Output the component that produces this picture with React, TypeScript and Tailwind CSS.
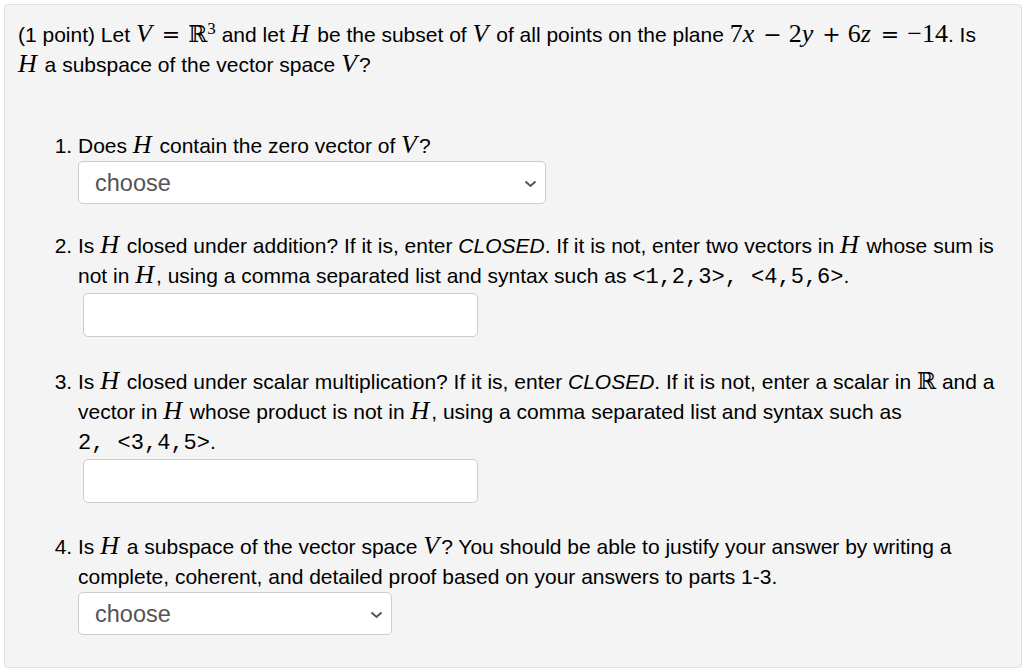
import React from 'react';

const V = ({ c }: { c: string }) => (
  <span className="font-['Liberation_Serif','DejaVu_Serif',serif] italic text-[26px] leading-none pr-[2px]">{c}</span>
);

const N = ({ children }: { children: React.ReactNode }) => (
  <span className="font-['Liberation_Serif','DejaVu_Serif',serif] text-[26px] leading-none">{children}</span>
);

// relations get a little more room than binary operators, like TeX
const Rel = ({ c }: { c: string }) => (
  <span className="font-['DejaVu_Serif',serif] text-[22px] leading-none mx-[8px]">{c}</span>
);

const Bin = ({ c }: { c: string }) => (
  <span className="font-['DejaVu_Serif',serif] text-[22px] leading-none mx-[7px]">{c}</span>
);

const R = () => <span className="font-['DejaVu_Serif',serif] text-[23px] leading-none">ℝ</span>;

const Code = ({ children }: { children: React.ReactNode }) => (
  <code className="font-['Liberation_Mono',monospace] text-[22px] whitespace-pre">{children}</code>
);

function Choose({ width }: { width: string }) {
  return (
    <div className={`relative ${width} h-[43px] bg-white border border-[#cccccc] rounded-[5px] flex items-center pl-4`}>
      <span className="text-[23.5px] text-[#555555]">choose</span>
      <svg className="absolute right-[8px] top-[18px]" width="13" height="8" viewBox="0 0 13 8">
        <path d="M1.5 1.5 L6.5 6 L11.5 1.5" stroke="#555" strokeWidth="2" fill="none" />
      </svg>
    </div>
  );
}

function Answer() {
  return <div className="ml-[5px] w-[395px] h-[44px] bg-white border border-[#cccccc] rounded-[5px]" />;
}

export default function App() {
  return (
    <div className="w-[1024px] h-[670px] bg-white p-[4px] pr-[2px] pb-[2px] font-['Liberation_Sans',Arial,sans-serif] text-[21px] leading-[30px] text-black">
      <div className="h-full bg-[#f4f4f4] border border-[#e0e0e0] rounded-[4px] pl-[13px] pt-[15px]">
        <p>
          (1 point) Let <V c="V" /><Rel c="=" /><R /><sup className="font-['Liberation_Serif',serif] text-[17px]">3</sup> and let <V c="H" /> be the subset of <V c="V" /> of all points on the plane <N>7</N><V c="x" /><Bin c="−" /><N>2</N><V c="y" /><Bin c="+" /><N>6</N><V c="z" /><Rel c="=" /><N>−14</N>. Is
          <br />
          <V c="H" /> a subspace of the vector space <V c="V" />?
        </p>

        <ol className="list-decimal pl-[60px] mt-[51px]">
          <li className="pb-[27px]">
            Does <V c="H" /> contain the zero vector of <V c="V" />?
            <Choose width="w-[468px]" />
          </li>
          <li className="pb-[30px]">
            Is <V c="H" /> closed under addition? If it is, enter <i>CLOSED</i>. If it is not, enter two vectors in <V c="H" /> whose sum is
            <br />
            not in <V c="H" />, using a comma separated list and syntax such as <Code>&lt;1,2,3&gt;, &lt;4,5,6&gt;</Code>.
            <Answer />
          </li>
          <li className="pb-[29px]">
            Is <V c="H" /> closed under scalar multiplication? If it is, enter <i>CLOSED</i>. If it is not, enter a scalar in <R /> and a
            <br />
            vector in <V c="H" /> whose product is not in <V c="H" />, using a comma separated list and syntax such as
            <br />
            <Code>2, &lt;3,4,5&gt;</Code>.
            <Answer />
          </li>
          <li>
            Is <V c="H" /> a subspace of the vector space <V c="V" />? You should be able to justify your answer by writing a
            <br />
            complete, coherent, and detailed proof based on your answers to parts 1-3.
            <Choose width="w-[314px]" />
          </li>
        </ol>
      </div>
    </div>
  );
}
